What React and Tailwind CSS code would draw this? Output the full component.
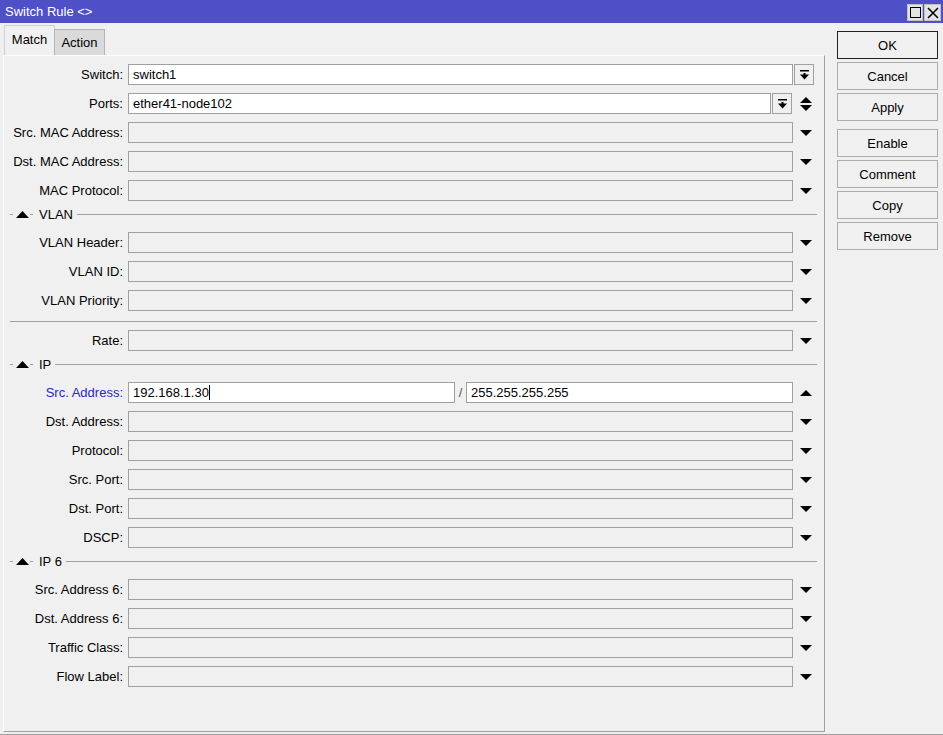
import React from "react";

const GRAY = "bg-[#a0a0a0]";

function Down() {
  return (
    <svg width="12" height="6" viewBox="0 0 12 6" className="block">
      <polygon points="0,0 12,0 6,6" fill="#000" />
    </svg>
  );
}
function Up({ w = 12, h = 6 }) {
  return (
    <svg width={w} height={h} viewBox={`0 0 ${w} ${h}`} className="block">
      <polygon points={`0,${h} ${w},${h} ${w / 2},0`} fill="#000" />
    </svg>
  );
}
function UpDown() {
  return (
    <div className="flex flex-col items-center gap-[2px]">
      <Up />
      <Down />
    </div>
  );
}
function DropBtn() {
  return (
    <div className="ml-[1px] w-[20px] h-[21px] border border-[#a0a0a0] bg-[#f0f0f0] flex items-center justify-center">
      <svg width="9" height="10" viewBox="0 0 9 10" className="block">
        <rect x="0" y="0" width="9" height="1.5" fill="#000" />
        <rect x="3.5" y="3" width="2" height="2" fill="#000" />
        <polygon points="0,4.5 9,4.5 4.5,9.5" fill="#000" />
      </svg>
    </div>
  );
}

function Input({ value, enabled, cursor, className = "" }) {
  return (
    <div
      className={`h-[21px] border border-[#a0a0a0] flex items-center pl-[4px] pr-[3px] text-black whitespace-nowrap overflow-hidden ${
        enabled ? "bg-white" : "bg-[#f0f0f0]"
      } ${className}`}
    >
      {value}
      {cursor && <span className="inline-block w-px h-[15px] bg-black" />}
    </div>
  );
}

function Label({ children, blue }) {
  return (
    <div className={`w-[113px] text-right whitespace-nowrap ${blue ? "text-[#2828c0]" : "text-black"}`}>
      {children}
    </div>
  );
}

function Row({ label, children, blue }) {
  return (
    <div className="h-[29px] flex items-center">
      <Label blue={blue}>{label}</Label>
      <div className="ml-[5px] flex-1 flex items-center">{children}</div>
    </div>
  );
}

function EmptyRow({ label }) {
  return (
    <Row label={label}>
      <Input className="flex-1" />
      <div className="w-[24px] flex justify-center pl-[1px]">
        <Down />
      </div>
    </Row>
  );
}

function Header({ title }) {
  return (
    <div className="h-[23px] pb-[4px] flex items-center">
      <div className={`w-[3px] h-px ${GRAY}`} />
      <div className="ml-[3px]">
        <Up w={13} h={7} />
      </div>
      <div className={`ml-[1px] w-[3px] h-px ${GRAY}`} />
      <div className="ml-[6px] whitespace-nowrap">{title}</div>
      <div className={`ml-[4px] flex-1 h-px ${GRAY}`} />
    </div>
  );
}

function Sep() {
  return (
    <div className="h-[11px] pt-[6px]">
      <div className={`h-px ${GRAY}`} />
    </div>
  );
}

function Btn({ children, def }) {
  return (
    <div
      className={`h-[28px] w-[101px] flex items-center justify-center bg-[#f0f0f0] border ${
        def ? "border-[#222]" : "border-[#adadad]"
      }`}
    >
      {children}
    </div>
  );
}

export default function App() {
  return (
    <div
      className="w-[943px] h-[735px] bg-[#f0f0f0] flex flex-col overflow-hidden text-[13px] leading-none text-black"
      style={{ fontFamily: '"Liberation Sans", Arial, sans-serif' }}
    >
      {/* title bar */}
      <div className="h-[23px] bg-[#4f4fc8] flex items-center pl-[5px] pr-[2px] text-white">
        <div className="flex-1">Switch Rule &lt;&gt;</div>
        <div className="flex items-center gap-[1px] mt-[2px]">
          <div className="w-[16px] h-[17px] bg-[#e4e4e4] border border-[#c0c0c0] flex items-center justify-center">
            <div className="w-[11px] h-[11px] border-[1.5px] border-black" />
          </div>
          <div className="w-[17px] h-[17px] bg-[#e4e4e4] border border-[#c0c0c0] flex items-center justify-center">
            <svg width="12" height="12" viewBox="0 0 12 12" className="block">
              <path d="M1 1 L11 11 M11 1 L1 11" stroke="#000" strokeWidth="1.6" />
            </svg>
          </div>
        </div>
      </div>

      <div className="flex">
        {/* left */}
        <div className="ml-[3px] w-[822px] flex flex-col">
          <div className="h-[32px] flex items-end pl-[1px]">
            <div className="w-[51px] h-[30px] bg-[#f0f0f0] border-l border-t border-r border-[#d0d0d0] flex items-center justify-center pb-[2px]">
              Match
            </div>
            <div className="w-[51px] h-[26px] bg-[#dadada] border border-b-0 border-[#b4b4b4] -ml-px flex items-center justify-center">
              Action
            </div>
          </div>
          <div className="h-[677px] border-l border-t border-white border-r border-b border-r-[#a0a0a0] border-b-[#a0a0a0] pt-[4px] pl-[6px] pr-[7px]">
            <Row label="Switch:">
              <Input value="switch1" enabled className="flex-1" />
              <DropBtn />
              <div className="w-[3px]" />
            </Row>
            <Row label="Ports:">
              <Input value="ether41-node102" enabled className="flex-1" />
              <DropBtn />
              <div className="w-[25px] flex justify-center pl-[2px]">
                <UpDown />
              </div>
            </Row>
            <EmptyRow label="Src. MAC Address:" />
            <EmptyRow label="Dst. MAC Address:" />
            <EmptyRow label="MAC Protocol:" />
            <Header title="VLAN" />
            <EmptyRow label="VLAN Header:" />
            <EmptyRow label="VLAN ID:" />
            <EmptyRow label="VLAN Priority:" />
            <Sep />
            <EmptyRow label="Rate:" />
            <Header title="IP" />
            <Row label="Src. Address:" blue>
              <Input value="192.168.1.30" enabled cursor className="w-[327px]" />
              <div className="w-[11px] text-center text-[#555]">/</div>
              <Input value="255.255.255.255" enabled className="flex-1" />
              <div className="w-[24px] flex justify-center pl-[1px]">
                <Up />
              </div>
            </Row>
            <EmptyRow label="Dst. Address:" />
            <EmptyRow label="Protocol:" />
            <EmptyRow label="Src. Port:" />
            <EmptyRow label="Dst. Port:" />
            <EmptyRow label="DSCP:" />
            <Header title="IP 6" />
            <EmptyRow label="Src. Address 6:" />
            <EmptyRow label="Dst. Address 6:" />
            <EmptyRow label="Traffic Class:" />
            <EmptyRow label="Flow Label:" />
          </div>
        </div>

        {/* right buttons */}
        <div className="ml-[12px] mt-[8px] flex flex-col">
          <div className="flex flex-col gap-[3px]">
            <Btn def>OK</Btn>
            <Btn>Cancel</Btn>
            <Btn>Apply</Btn>
          </div>
          <div className="mt-[8px] flex flex-col gap-[3px]">
            <Btn>Enable</Btn>
            <Btn>Comment</Btn>
            <Btn>Copy</Btn>
            <Btn>Remove</Btn>
          </div>
        </div>
      </div>
      <div className={`mt-[2px] h-px ${GRAY}`} />
    </div>
  );
}
